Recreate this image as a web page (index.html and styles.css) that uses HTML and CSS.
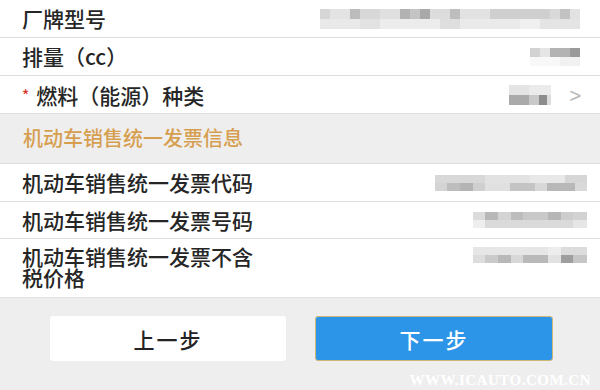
FILE: index.html
```html
<!DOCTYPE html>
<html lang="zh-CN">
  <head>
    <meta charset="UTF-8" />
    <meta name="viewport" content="width=device-width, initial-scale=1.0" />
    <title>车辆信息</title>
    <link rel="stylesheet" href="styles.css">
  </head>
  <body>
    <div class="page">
      <!-- Vehicle info -->
      <div class="list">
        <div class="row">
          <span class="label">厂牌型号</span>
          <span class="mosaic mosaic-brand"></span>
        </div>
        <div class="row">
          <span class="label">排量（cc）</span>
          <span class="mosaic mosaic-cc"></span>
        </div>
        <div class="row">
          <span class="label"><i class="required">*</i>燃料（能源）种类</span>
          <span class="value-group">
            <span class="mosaic mosaic-fuel"></span>
            <span class="arrow">&gt;</span>
          </span>
        </div>
      </div>

      <!-- Invoice info -->
      <div class="section-title">机动车销售统一发票信息</div>
      <div class="list">
        <div class="row">
          <span class="label">机动车销售统一发票代码</span>
          <span class="mosaic mosaic-code"></span>
        </div>
        <div class="row row-short">
          <span class="label">机动车销售统一发票号码</span>
          <span class="mosaic mosaic-number"></span>
        </div>
        <div class="row row-tall">
          <span class="label label-wrap">机动车销售统一发票不含税价格</span>
          <span class="mosaic mosaic-price"></span>
        </div>
      </div>

      <div class="actions">
        <button class="btn btn-prev">上一步</button>
        <button class="btn btn-next">下一步</button>
      </div>

      <div class="watermark">WWW.ICAUTO.COM.CN</div>
    </div>
  </body>
</html>
```

FILE: styles.css
```css
body {
  margin: 0;
  font-family: "Noto Sans CJK SC", "Noto Sans", sans-serif;
  background-color: #efeeef;
}

.page {
  position: relative;
  width: 600px;
  height: 390px;
  overflow: hidden;
  background-color: #efeeef;
}

.list {
  background-color: #fff;
}

.row {
  display: flex;
  align-items: center;
  justify-content: space-between;
  height: 37px;
  padding: 0 13px 0 22px;
  border-bottom: 1px solid #dedede;
  box-sizing: content-box;
}

.row-short {
  height: 36px;
}

.row-tall {
  height: 58px;
  border-bottom: none;
}

.label {
  font-size: 21px;
  line-height: 21px;
  font-weight: 500;
  color: #262626;
  white-space: nowrap;
}

.label-wrap {
  width: 235px;
  white-space: normal;
  margin-top: -3px;
}

.required {
  font-style: normal;
  color: #d9372b;
  font-size: 15px;
  margin-right: 7px;
  vertical-align: 3px;
}

.value-group {
  display: flex;
  align-items: center;
  gap: 16px;
  margin-right: 3px;
}

.arrow {
  color: #b9b9b9;
  font-family: "DejaVu Sans", sans-serif;
  font-size: 20px;
  line-height: 20px;
  transform: scaleX(0.8);
}

.section-title {
  height: 50px;
  line-height: 48px;
  padding-left: 23px;
  font-size: 20px;
  font-weight: 500;
  color: #d69f50;
  border-bottom: 1px solid #dcdcdc;
  box-sizing: border-box;
}

/* pixelated (blurred) values */
.mosaic {
  display: block;
}

.mosaic-brand {
  width: 260px;
  height: 20px;
  margin-right: 7px;
  background:
    linear-gradient(90deg, #d6d6d6 0 10px, #e3e3e3 10px 30px, #bcbcbc 30px 40px,
      #d8d8d8 40px 60px, #e0e0e0 60px 80px, #b2b2b2 80px 90px, #c4c4c4 90px 100px,
      #a9a9a9 100px 110px, #dcdcdc 110px 130px, #bdbdbd 130px 140px,
      #e2e2e2 140px 170px, #cfcfcf 170px 230px, #d9d9d9 230px 240px,
      #c2c2c2 240px 250px, #e2e2e2 250px 260px) top / 100% 50% no-repeat,
    linear-gradient(90deg, #e9e9e9 0 40px, #e2e2e2 40px 60px, #ececec 60px 120px,
      #dedede 120px 140px, #eaeaea 140px 200px, #f0f0f0 200px 220px,
      #e4e4e4 220px 260px) bottom / 100% 50% no-repeat;
}

.mosaic-cc {
  width: 50px;
  height: 18px;
  margin-right: 7px;
  background:
    linear-gradient(90deg, #d2d2d2 0 10px, #e5e5e5 10px 20px, #b3b3b3 20px 40px,
      #9a9a9a 40px 50px) top / 100% 50% no-repeat,
    linear-gradient(90deg, #f8f8f8 0 30px, #f1f1f1 30px 50px) bottom / 100% 50% no-repeat;
}

.mosaic-fuel {
  width: 42px;
  height: 20px;
  background:
    linear-gradient(90deg, #e4e4e4 0 20px, #ebebeb 20px 42px) top / 100% 50% no-repeat,
    linear-gradient(90deg, #aaaaaa 0 20px, #c9c9c9 20px 30px, #8c8c8c 30px 38px,
      #dcdcdc 38px 42px) bottom / 100% 50% no-repeat;
}

.mosaic-code {
  width: 152px;
  height: 16px;
  background:
    linear-gradient(90deg, #d8d8d8 0 50px, #e2e2e2 50px 95px, #e8e8e8 95px 130px,
      #d6d6d6 130px 152px) top / 100% 50% no-repeat,
    linear-gradient(90deg, #d4d4d4 0 12px, #bdbdbd 12px 25px, #b4b4b4 25px 38px,
      #cfcfcf 38px 50px, #e0e0e0 50px 75px, #c4c4c4 75px 100px, #d8d8d8 100px 112px,
      #b8b8b8 112px 140px, #d9d9d9 140px 152px) bottom / 100% 50% no-repeat;
}

.mosaic-number {
  width: 114px;
  height: 16px;
  background:
    linear-gradient(90deg, #dcdcdc 0 12px, #b8b8b8 12px 25px, #d4d4d4 25px 38px,
      #bcbcbc 38px 50px, #c9c9c9 50px 75px, #b6b6b6 75px 88px, #cdcdcd 88px 100px,
      #d2d2d2 100px 114px) top / 100% 50% no-repeat,
    linear-gradient(90deg, #eeeeee 0 12px, #dadada 12px 100px, #e6e6e6 100px 114px) bottom / 100% 50% no-repeat;
}

.mosaic-price {
  width: 114px;
  height: 16px;
  margin-top: -26px;
  background:
    linear-gradient(90deg, #e6e6e6 0 75px, #ededed 75px 88px, #dcdcdc 88px 114px) top / 100% 50% no-repeat,
    linear-gradient(90deg, #dddddd 0 12px, #cacaca 12px 25px, #b8b8b8 25px 38px,
      #d8d8d8 38px 50px, #b9b9b9 50px 75px, #e2e2e2 75px 88px, #9e9e9e 88px 100px,
      #c6c6c6 100px 114px) bottom / 100% 50% no-repeat;
}

.actions {
  display: flex;
  gap: 29px;
  padding: 18px 47px 0 50px;
  border-top: 1px solid #e2e2e2;
}

.btn {
  flex: 1;
  height: 45px;
  border-radius: 3px;
  font-family: "Noto Sans CJK SC", sans-serif;
  font-size: 21px;
  font-weight: 500;
  letter-spacing: 2px;
  cursor: pointer;
}

.btn-prev {
  background-color: #fff;
  border: none;
  color: #222;
}

.btn-next {
  background-color: #2d95e8;
  border: 1px solid #cdb877;
  color: #fff;
}

.watermark {
  position: absolute;
  right: 9px;
  bottom: 1px;
  font-family: "Liberation Serif", serif;
  font-weight: bold;
  font-size: 15px;
  letter-spacing: 0.5px;
  color: #fff;
}
```
